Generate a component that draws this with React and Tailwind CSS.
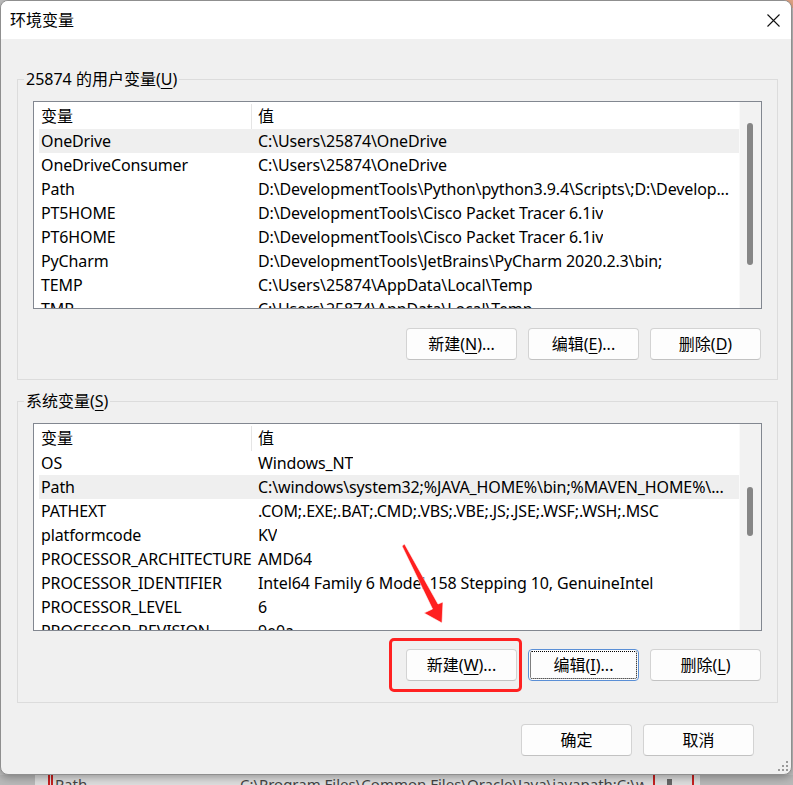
import clsx from 'clsx';

const userVars = [
  ['OneDrive', 'C:\\Users\\25874\\OneDrive'],
  ['OneDriveConsumer', 'C:\\Users\\25874\\OneDrive'],
  ['Path', 'D:\\DevelopmentTools\\Python\\python3.9.4\\Scripts\\;D:\\Develop...'],
  ['PT5HOME', 'D:\\DevelopmentTools\\Cisco Packet Tracer 6.1iv'],
  ['PT6HOME', 'D:\\DevelopmentTools\\Cisco Packet Tracer 6.1iv'],
  ['PyCharm', 'D:\\DevelopmentTools\\JetBrains\\PyCharm 2020.2.3\\bin;'],
  ['TEMP', 'C:\\Users\\25874\\AppData\\Local\\Temp'],
  ['TMP', 'C:\\Users\\25874\\AppData\\Local\\Temp'],
];

const systemVars = [
  ['OS', 'Windows_NT'],
  ['Path', 'C:\\windows\\system32;%JAVA_HOME%\\bin;%MAVEN_HOME%\\...'],
  ['PATHEXT', '.COM;.EXE;.BAT;.CMD;.VBS;.VBE;.JS;.JSE;.WSF;.WSH;.MSC'],
  ['platformcode', 'KV'],
  ['PROCESSOR_ARCHITECTURE', 'AMD64'],
  ['PROCESSOR_IDENTIFIER', 'Intel64 Family 6 Model 158 Stepping 10, GenuineIntel'],
  ['PROCESSOR_LEVEL', '6'],
  ['PROCESSOR_REVISION', '9e0a'],
];

const Key = ({ children }) => <span className="underline underline-offset-[3px] decoration-1">{children}</span>;

function Btn({ children, focus }) {
  return (
    <button
      className={clsx(
        'relative w-[111px] h-[32px] rounded-[4px] bg-[#fdfdfd] border flex items-center justify-center text-[16px] text-black',
        focus ? 'border-[#5a8fd6]' : 'border-[#d3d3d3] border-b-[#c2c2c2]'
      )}
    >
      {focus && <span className="absolute inset-[1px] border border-dotted border-black rounded-[2px]" />}
      <span>{children}</span>
    </button>
  );
}

function VarList({ rows, selected, thumb }) {
  return (
    <div className="h-[208px] border border-[#828790] bg-white flex">
      <div className="flex-1 overflow-hidden pl-[5px] tracking-[-0.12px]">
        <div className="h-[27px] flex items-center">
          <div className="w-[213px] h-[25px] mt-[1px] border-r border-[#e5e5e5] pl-[2px] flex items-center">变量</div>
          <div className="pl-[6px]">值</div>
        </div>
        {rows.map(([k, v], i) => (
          <div
            key={k}
            className={clsx('h-[24px] flex items-center whitespace-nowrap', i === selected && 'bg-[#efefef]')}
          >
            <div className="w-[217px] shrink-0 pl-[2px]">{k}</div>
            <div className="pl-[2px] overflow-hidden">{v}</div>
          </div>
        ))}
      </div>
      <div className="w-[22px] bg-[#f2f2f2] border-l border-[#fafafa] pl-[7px]">
        <div className={clsx('w-[6px] rounded-full bg-[#868686]', thumb)} />
      </div>
    </div>
  );
}

export default function App() {
  return (
    <div className="relative w-[793px] h-[785px] overflow-hidden bg-[#c4c4c4] font-['Noto_Sans','Noto_Sans_CJK_SC',sans-serif] text-[16px] text-black">
      <div className="absolute top-0 right-0 w-[106px] h-[8px] bg-[#e7a887]" />

      <div className="relative w-[792px] h-[775px] bg-[#f0f0f0] border border-[#8f8f8f] rounded-[8px] overflow-hidden flex flex-col shadow-[0_2px_10px_rgba(0,0,0,0.35)]">
        {/* title bar */}
        <div className="h-[38px] shrink-0 bg-white flex items-center justify-between pl-[9px] pr-[11px]">
          <span className="text-[16px]">环境变量</span>
          <svg width="13" height="13" viewBox="0 0 13 13" className="mt-[1px]">
            <path d="M0.5 0.5 L12.5 12.5 M12.5 0.5 L0.5 12.5" stroke="#111" strokeWidth="1.1" fill="none" />
          </svg>
        </div>

        <div className="flex flex-col px-[16px]">
          {/* user variables */}
          <fieldset className="mt-[30px] w-[761px] border border-[#dcdcdc] px-[15px] pb-[19px]">
            <legend className="-ml-[9px] px-[2px] leading-[20px]">
              25874 的用户变量(<Key>U</Key>)
            </legend>
            <div className="mt-[12px]">
              <VarList rows={userVars} selected={0} thumb="mt-[21px] h-[142px]" />
            </div>
            <div className="mt-[19px] flex justify-end gap-[11px] pr-[1px]">
              <Btn>新建(<Key>N</Key>)...</Btn>
              <Btn>编辑(<Key>E</Key>)...</Btn>
              <Btn>删除(<Key>D</Key>)</Btn>
            </div>
          </fieldset>

          {/* system variables */}
          <fieldset className="mt-[11px] w-[761px] border border-[#dcdcdc] px-[15px] pb-[21px]">
            <legend className="-ml-[9px] px-[2px] leading-[20px]">
              系统变量(<Key>S</Key>)
            </legend>
            <div className="mt-[12px]">
              <VarList rows={systemVars} selected={1} thumb="mt-[63px] h-[49px]" />
            </div>
            <div className="mt-[18px] flex justify-end gap-[11px] pr-[1px]">
              <div className="relative">
                <Btn>新建(<Key>W</Key>)...</Btn>
                <div className="absolute -left-[17px] -right-[5px] -top-[11px] -bottom-[11px] border-[3px] border-[#ff2121] rounded-[5px] pointer-events-none" />
              </div>
              <Btn focus>编辑(<Key>I</Key>)...</Btn>
              <Btn>删除(<Key>L</Key>)</Btn>
            </div>
          </fieldset>

          <div className="mt-[21px] flex justify-end gap-[11px] pr-[21px]">
            <Btn>确定</Btn>
            <Btn>取消</Btn>
          </div>
        </div>

        {/* resize grip */}
        <svg width="12" height="12" viewBox="0 0 12 12" className="absolute right-[2px] bottom-[2px]">
          <g fill="#9a9a9a">
            <rect x="9" y="1" width="2" height="2" />
            <rect x="5" y="5" width="2" height="2" />
            <rect x="9" y="5" width="2" height="2" />
            <rect x="1" y="9" width="2" height="2" />
            <rect x="5" y="9" width="2" height="2" />
            <rect x="9" y="9" width="2" height="2" />
          </g>
        </svg>
      </div>

      {/* window behind the dialog */}
      <div className="h-[10px] flex items-start text-[15px] leading-[18px] text-[#444] whitespace-nowrap">
        <div className="w-[35px] h-full bg-[#b9b9b9]" />
        <div className="w-[665px] h-full bg-[#dedede] flex">
          <div className="w-[2px] h-full bg-[#c62020] ml-[13px]" />
          <div className="w-[2px] h-full bg-[#c62020] ml-[1px]" />
          <div className="w-[187px] pl-[2px]">Path</div>
          <div className="w-[405px] overflow-hidden">C:\Program Files\Common Files\Oracle\Java\javapath;C:\windo...</div>
          <div className="w-[2px] h-full bg-[#c62020] ml-[8px]" />
          <div className="w-[5px] h-[6px] mt-[4px] bg-[#666] ml-[12px]" />
          <div className="w-[2px] h-full bg-[#c62020] ml-[20px]" />
        </div>
        <div className="flex-1 h-full bg-[#b9b9b9]" />
      </div>

      {/* red annotation arrow */}
      <svg className="absolute inset-0 pointer-events-none" width="793" height="785" viewBox="0 0 793 785">
        <polygon
          points="402,546 404.5,544 438,604 443,602 442,623 424,613 432.5,609"
          fill="#ff1f1f"
          stroke="#fff"
          strokeWidth="0.6"
        />
      </svg>
    </div>
  );
}
